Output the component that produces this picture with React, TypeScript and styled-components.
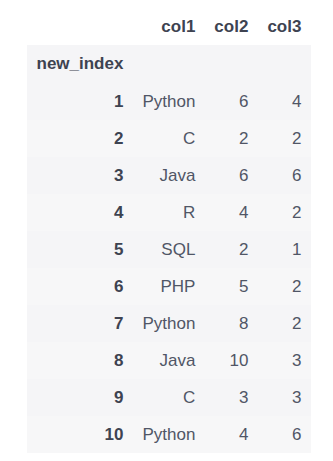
import React from "react";
import styled, { createGlobalStyle } from "styled-components";

const rows: [number, string, number, number][] = [
  [1, "Python", 6, 4],
  [2, "C", 2, 2],
  [3, "Java", 6, 6],
  [4, "R", 4, 2],
  [5, "SQL", 2, 1],
  [6, "PHP", 5, 2],
  [7, "Python", 8, 2],
  [8, "Java", 10, 3],
  [9, "C", 3, 3],
  [10, "Python", 4, 6],
];

const App = () => {
  return (
    <>
      <GlobalStyle />
      <Wrapper>
        <Table>
          <thead>
            <HeadRow>
              <HeadCell />
              <HeadCell>col1</HeadCell>
              <HeadCell>col2</HeadCell>
              <HeadCell>col3</HeadCell>
            </HeadRow>
            <IndexNameRow>
              <IndexName>new_index</IndexName>
              <HeadCell />
              <HeadCell />
              <HeadCell />
            </IndexNameRow>
          </thead>
          <tbody>
            {rows.map(([idx, lang, a, b]) => (
              <Row key={idx} $odd={idx % 2 === 1}>
                <IndexCell>{idx}</IndexCell>
                <Cell>{lang}</Cell>
                <Cell>{a}</Cell>
                <Cell>{b}</Cell>
              </Row>
            ))}
          </tbody>
        </Table>
      </Wrapper>
    </>
  );
};

export default App;

const GlobalStyle = createGlobalStyle`
  body {
    margin: 0;
    background: #ffffff;
  }
`;

const Wrapper = styled.div`
  padding: 8px 0 0 27px;
`;

const Table = styled.table`
  border-collapse: collapse;
  border-spacing: 0;
  font-family: "Liberation Sans", Arial, sans-serif;
  font-size: 17px;
  color: #505666;
`;

const HeadRow = styled.tr`
  height: 37px;
  background: #ffffff;
`;

const IndexNameRow = styled.tr`
  height: 38px;
  background: #f5f5f7;
`;

const Row = styled.tr<{ $odd: boolean }>`
  height: 37px;
  background: ${(p) => (p.$odd ? "#f5f5f7" : "#f7f7f8")};
`;

const HeadCell = styled.th`
  padding: 0 9.5px;
  text-align: right;
  font-weight: bold;
  color: #3e4351;
  vertical-align: middle;
`;

const IndexName = styled(HeadCell)`
  text-align: left;
`;

const IndexCell = styled(HeadCell)``;

const Cell = styled.td`
  padding: 0 9.5px;
  text-align: right;
  vertical-align: middle;
`;
